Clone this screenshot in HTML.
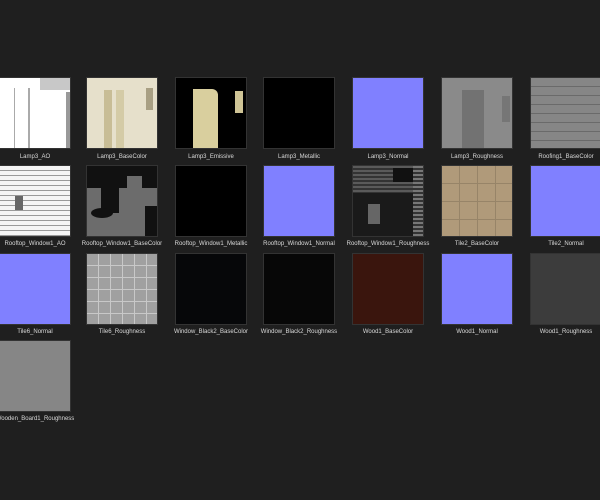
<!DOCTYPE html>
<html><head><meta charset="utf-8"><style>
html,body{margin:0;padding:0;width:600px;height:500px;background:#1f1f1f;overflow:hidden;font-family:"Liberation Sans",sans-serif}
.t{position:absolute;width:72px;height:72px;overflow:hidden;box-sizing:border-box;border:1px solid #333}
.l{position:absolute;width:100px;text-align:center;font-size:6px;color:#d8d8d8;white-space:nowrap}
.n{background:#8080ff}
.k{background:#000}
</style></head><body>
<!-- Row 1 -->
<div class="t" style="left:-1px;top:77px;background:#fff">
 <div style="position:absolute;left:40px;top:0;width:32px;height:12px;background:#c8c8c8"></div>
 <div style="position:absolute;left:14px;top:10px;width:1px;height:60px;background:#aaa"></div>
 <div style="position:absolute;left:28px;top:10px;width:2px;height:60px;background:#aaa"></div>
 <div style="position:absolute;left:66px;top:14px;width:6px;height:58px;background:#999"></div>
</div>
<div class="l" style="left:-15px;top:154px">Lamp3_AO</div>
<div class="t" style="left:86px;top:77px;background:#e6e0cb">
 <div style="position:absolute;left:17px;top:12px;width:8px;height:60px;background:#c8bd96"></div>
 <div style="position:absolute;left:29px;top:12px;width:8px;height:60px;background:#d4cba6"></div>
 <div style="position:absolute;left:59px;top:10px;width:7px;height:22px;background:#a89f83"></div>
</div>
<div class="l" style="left:72px;top:154px">Lamp3_BaseColor</div>
<div class="t k" style="left:175px;top:77px">
 <div style="position:absolute;left:17px;top:11px;width:25px;height:61px;background:#d9cf9e;border-radius:0 6px 0 0"></div>
 <div style="position:absolute;left:59px;top:13px;width:8px;height:22px;background:#cfc496"></div>
</div>
<div class="l" style="left:161px;top:154px">Lamp3_Emissive</div>
<div class="t k" style="left:263px;top:77px"></div>
<div class="l" style="left:249px;top:154px">Lamp3_Metallic</div>
<div class="t n" style="left:352px;top:77px"></div>
<div class="l" style="left:338px;top:154px">Lamp3_Normal</div>
<div class="t" style="left:441px;top:77px;background:#8a8a8a">
 <div style="position:absolute;left:20px;top:12px;width:22px;height:60px;background:#727272"></div>
 <div style="position:absolute;left:60px;top:18px;width:8px;height:26px;background:#767676"></div>
</div>
<div class="l" style="left:427px;top:154px">Lamp3_Roughness</div>
<div class="t" style="left:530px;top:77px;background:repeating-linear-gradient(#868686 0 8px,#6a6a6a 8px 9px)"></div>
<div class="l" style="left:516px;top:154px">Roofing1_BaseColor</div>
<!-- Row 2 -->
<div class="t" style="left:-1px;top:165px;background:repeating-linear-gradient(#f4f4f4 0 4px,#999 4px 5px)">
 <div style="position:absolute;left:15px;top:30px;width:8px;height:14px;background:#666"></div>
</div>
<div class="l" style="left:-15px;top:241px">Rooftop_Window1_AO</div>
<div class="t" style="left:86px;top:165px;background:#6c6c6c">
 <div style="position:absolute;left:0;top:0;width:40px;height:22px;background:#111"></div>
 <div style="position:absolute;left:14px;top:22px;width:18px;height:25px;background:#111"></div>
 <div style="position:absolute;left:40px;top:0;width:32px;height:10px;background:#111"></div>
 <div style="position:absolute;left:55px;top:10px;width:17px;height:12px;background:#111"></div>
 <div style="position:absolute;left:58px;top:40px;width:14px;height:32px;background:#111"></div>
 <div style="position:absolute;left:4px;top:42px;width:22px;height:10px;background:#111;border-radius:50%"></div>
</div>
<div class="l" style="left:72px;top:241px">Rooftop_Window1_BaseColor</div>
<div class="t k" style="left:175px;top:165px"></div>
<div class="l" style="left:161px;top:241px">Rooftop_Window1_Metallic</div>
<div class="t n" style="left:263px;top:165px"></div>
<div class="l" style="left:249px;top:241px">Rooftop_Window1_Normal</div>
<div class="t" style="left:352px;top:165px;background:#1a1a1a">
 <div style="position:absolute;left:0;top:0;width:72px;height:27px;background:repeating-linear-gradient(#5a5a5a 0 2px,#333 2px 4px)"></div>
 <div style="position:absolute;left:40px;top:2px;width:24px;height:14px;background:#111"></div>
 <div style="position:absolute;left:60px;top:0;width:10px;height:72px;background:repeating-linear-gradient(#777 0 2px,#333 2px 4px)"></div>
 <div style="position:absolute;left:15px;top:38px;width:12px;height:20px;background:#666"></div>
</div>
<div class="l" style="left:338px;top:241px">Rooftop_Window1_Roughness</div>
<div class="t" style="left:441px;top:165px;background:#b09a7a;background-image:repeating-linear-gradient(90deg,transparent 0 17px,#978468 17px 18px),repeating-linear-gradient(transparent 0 17px,#978468 17px 18px)"></div>
<div class="l" style="left:427px;top:241px">Tile2_BaseColor</div>
<div class="t n" style="left:530px;top:165px"></div>
<div class="l" style="left:516px;top:241px">Tile2_Normal</div>
<!-- Row 3 -->
<div class="t n" style="left:-1px;top:253px"></div>
<div class="l" style="left:-15px;top:329px">Tile6_Normal</div>
<div class="t" style="left:86px;top:253px;background:#a0a0a0;background-image:repeating-linear-gradient(90deg,transparent 0 11px,#c8c8c8 11px 12px),repeating-linear-gradient(transparent 0 11px,#c8c8c8 11px 12px)"></div>
<div class="l" style="left:72px;top:329px">Tile6_Roughness</div>
<div class="t" style="left:175px;top:253px;background:#060709"></div>
<div class="l" style="left:161px;top:329px">Window_Black2_BaseColor</div>
<div class="t" style="left:263px;top:253px;background:#070707"></div>
<div class="l" style="left:249px;top:329px">Window_Black2_Roughness</div>
<div class="t" style="left:352px;top:253px;background:#3a150d"></div>
<div class="l" style="left:338px;top:329px">Wood1_BaseColor</div>
<div class="t n" style="left:441px;top:253px"></div>
<div class="l" style="left:427px;top:329px">Wood1_Normal</div>
<div class="t" style="left:530px;top:253px;background:#3c3c3c"></div>
<div class="l" style="left:516px;top:329px">Wood1_Roughness</div>
<!-- Row 4 -->
<div class="t" style="left:-1px;top:340px;background:#868686"></div>
<div class="l" style="left:-15px;top:416px">Wooden_Board1_Roughness</div>
</body></html>
